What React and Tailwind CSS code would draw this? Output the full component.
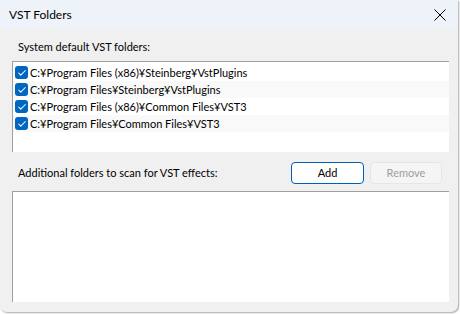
import { Check } from "lucide-react";

const systemFolders = [
  "C:¥Program Files (x86)¥Steinberg¥VstPlugins",
  "C:¥Program Files¥Steinberg¥VstPlugins",
  "C:¥Program Files (x86)¥Common Files¥VST3",
  "C:¥Program Files¥Common Files¥VST3",
];

function CheckBox() {
  return (
    <span className="flex h-[13px] w-[13px] shrink-0 items-center justify-center rounded-[3px] bg-[#0067c0]">
      <Check className="h-[10px] w-[10px] text-white" strokeWidth={2.5} />
    </span>
  );
}

export default function App() {
  return (
    <div
      className="h-[314px] w-[460px] overflow-hidden bg-white text-[11px] text-black"
      style={{ fontFamily: '"Segoe UI", Lato, "Noto Sans", sans-serif' }}
    >
      <div className="flex h-[312px] w-[458px] flex-col overflow-hidden rounded-b-[7px] bg-[#f0f0f0] shadow-[1px_1px_2px_rgba(0,0,0,0.35)]">
        {/* title bar */}
        <div className="flex h-[29px] shrink-0 items-center justify-between bg-[#eef3f9] pl-[9px] pr-[6px] text-[12px]">
          <span>VST Folders</span>
          <svg width="24" height="24" viewBox="0 0 24 24" className="text-black">
            <path d="M6.5 6.5L17.5 17.5M17.5 6.5L6.5 17.5" stroke="currentColor" strokeWidth="1" />
          </svg>
        </div>

        {/* body */}
        <div className="flex flex-1 flex-col px-[12px]">
          <div className="pl-[6px] pt-[9px] leading-[17px]">System default VST folders:</div>
          <div className="mt-[6px] h-[91px] w-[437px] border-l border-t border-[#a0a0a0] bg-white pt-[2px]">
            {systemFolders.map((f, i) => (
              <div
                key={f}
                className={`flex h-[17px] items-center gap-[2px] pl-[2px] ${i % 2 === 1 ? "bg-[#f9f9f9]" : ""}`}
              >
                <CheckBox />
                <span className="leading-[17px]">{f}</span>
              </div>
            ))}
          </div>

          <div className="mt-[10px] flex h-[22px] items-center">
            <span className="flex-1 pl-[6px]">Additional folders to scan for VST effects:</span>
            <button className="mr-[6px] h-[22px] w-[73px] rounded-[4px] border border-[#005fb8] bg-white">
              Add
            </button>
            <button className="mr-[4px] h-[22px] w-[72px] rounded-[4px] border border-[#e6e6e6] bg-[#f5f5f5] text-[#9d9d9d]">
              Remove
            </button>
          </div>

          <div className="mt-[7px] h-[111px] w-[437px] border-l border-t border-[#a0a0a0] bg-white" />
        </div>
      </div>
    </div>
  );
}
